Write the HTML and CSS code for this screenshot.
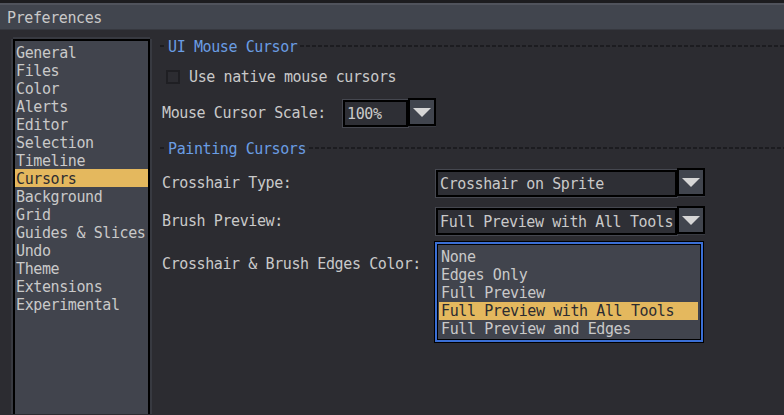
FILE: index.html
```html
<!DOCTYPE html>
<html lang="en">
  <head>
    <meta charset="UTF-8" />
    <meta name="viewport" content="width=device-width, initial-scale=1.0" />
    <title>Preferences</title>
    <link rel="stylesheet" href="styles.css">
  </head>
  <body>
    <div class="menu-edge"></div>
    <div class="titlebar">Preferences</div>

    <div class="window">
      <ul class="sections">
        <li>General</li>
        <li>Files</li>
        <li>Color</li>
        <li>Alerts</li>
        <li>Editor</li>
        <li>Selection</li>
        <li>Timeline</li>
        <li class="selected">Cursors</li>
        <li>Background</li>
        <li>Grid</li>
        <li>Guides &amp; Slices</li>
        <li>Undo</li>
        <li>Theme</li>
        <li>Extensions</li>
        <li>Experimental</li>
      </ul>

      <div class="panel">
        <div class="separator sep-ui">
          <span class="dash-start"></span>
          <span class="sep-label">UI Mouse Cursor</span>
          <span class="dash-rest"></span>
        </div>

        <div class="row check-row">
          <span class="checkbox"></span>
          <span>Use native mouse cursors</span>
        </div>

        <div class="row scale-row">
          <span class="label">Mouse Cursor Scale:</span>
          <div class="combo">
            <div class="combo-field scale-field">100%</div>
            <div class="combo-button">
              <svg width="18" height="9" viewBox="0 0 18 9"><polygon points="0,0 18,0 9,9" fill="#d6d6d6"/></svg>
            </div>
          </div>
        </div>

        <div class="separator sep-paint">
          <span class="dash-start"></span>
          <span class="sep-label">Painting Cursors</span>
          <span class="dash-rest"></span>
        </div>

        <div class="row option-row crosshair-row">
          <span class="label wide">Crosshair Type:</span>
          <div class="combo">
            <div class="combo-field long-field">Crosshair on Sprite</div>
            <div class="combo-button">
              <svg width="18" height="9" viewBox="0 0 18 9"><polygon points="0,0 18,0 9,9" fill="#d6d6d6"/></svg>
            </div>
          </div>
        </div>

        <div class="row option-row brush-row">
          <span class="label wide">Brush Preview:</span>
          <div class="combo">
            <div class="combo-field long-field">Full Preview with All Tools</div>
            <div class="combo-button">
              <svg width="18" height="9" viewBox="0 0 18 9"><polygon points="0,0 18,0 9,9" fill="#d6d6d6"/></svg>
            </div>
          </div>
        </div>

        <div class="row option-row edges-row">
          <span class="label wide">Crosshair &amp; Brush Edges Color:</span>
        </div>
      </div>
    </div>

    <!-- open dropdown of Brush Preview -->
    <ul class="popup">
      <li>None</li>
      <li>Edges Only</li>
      <li>Full Preview</li>
      <li class="selected">Full Preview with All Tools</li>
      <li>Full Preview and Edges</li>
    </ul>
  </body>
</html>
```

FILE: styles.css
```css
body {
  margin: 0;
  background-color: #2c2c31;
  color: #c9c9c9;
  font-family: "DejaVu Sans Mono", monospace;
  font-size: 15px;
  letter-spacing: -0.4px;
  overflow: hidden;
  height: 415px;
}
.menu-edge {
  height: 3px;
  background-color: #1c1c1f;
}
.titlebar {
  height: 24px;
  line-height: 26px;
  border-top: 2px solid #50535c;
  border-bottom: 1px solid #36383f;
  background-color: #41454e;
  padding-left: 7px;
}
.window {
  display: flex;
  align-items: flex-start;
}
.sections {
  list-style: none;
  margin: 9px 0 0 13px;
  padding: 2px 0 0 0;
  width: 133px;
  height: 371px;
  background-color: #41444d;
  border: 2px solid #000;
  border-bottom: none;
  box-shadow: -2px 0 0 #383a41, 2px 0 0 #383a41, 0 -2px 0 #383a41;
}
.sections li {
  height: 18px;
  line-height: 16px;
  padding-top: 2px;
  padding-left: 1px;
  box-sizing: border-box;
  white-space: nowrap;
}
.sections li.selected,
.popup li.selected {
  background-color: #e4b85e;
  color: #2c2c31;
}
.panel {
  flex: 1;
  margin-left: 10px;
  padding-top: 6px;
  display: flex;
  flex-direction: column;
}
.separator {
  display: flex;
  align-items: center;
  height: 20px;
}
.separator .sep-label {
  position: relative;
  top: 1px;
}
.dash-start,
.dash-rest {
  height: 2px;
  background-image: repeating-linear-gradient(to right, #1c1c20 0 4px, transparent 4px 6px);
}
.dash-start {
  width: 5px;
}
.dash-rest {
  flex: 1;
}
.sep-label {
  color: #6a9de3;
  padding: 0 3px;
}
.sep-paint {
  margin-top: 10px;
}
.row {
  display: flex;
  align-items: center;
  padding-left: 2px;
  white-space: nowrap;
}
.check-row {
  height: 20px;
  margin-top: 11px;
  padding-left: 6px;
}
.checkbox {
  width: 10px;
  height: 10px;
  border: 2px solid #1f1f23;
  margin-right: 9px;
}
.scale-row {
  height: 30px;
  margin-top: 11px;
}
.label {
  width: 181px;
}
.label.wide {
  width: 274px;
}
.combo {
  display: flex;
  align-items: flex-start;
  height: 30px;
  padding-top: 1px;
  box-sizing: border-box;
}
.combo-field {
  height: 27px;
  line-height: 24px;
  box-sizing: border-box;
  margin-top: 1px;
  border: 2px solid #000;
  box-shadow: 0 0 0 1px #45474f;
  background-color: #2e2f35;
  padding-left: 2px;
  overflow: hidden;
  white-space: nowrap;
}
.scale-field {
  width: 65px;
}
.long-field {
  width: 241px;
}
.combo-button {
  width: 28px;
  height: 28px;
  box-sizing: border-box;
  margin-top: -1px;
  border: 2px solid #000;
  background-color: #41454e;
  box-shadow: 0 1px 0 #383a41;
  display: flex;
  align-items: center;
  justify-content: center;
}
.option-row {
  height: 30px;
}
.crosshair-row {
  margin-top: 10px;
}
.brush-row {
  margin-top: 8px;
}
.edges-row {
  margin-top: 13px;
}
.popup {
  position: absolute;
  left: 435px;
  top: 242px;
  width: 268px;
  height: 100px;
  box-sizing: border-box;
  margin: 0;
  padding: 4px 3px 0 2px;
  list-style: none;
  background-color: #41444d;
  border: 2px solid #3b6fd5;
  box-shadow: 0 0 0 1px #000, inset 0 0 0 1px #000;
}
.popup li {
  height: 18px;
  line-height: 17px;
  padding-top: 1px;
  padding-left: 2px;
  box-sizing: border-box;
  white-space: nowrap;
}
```
